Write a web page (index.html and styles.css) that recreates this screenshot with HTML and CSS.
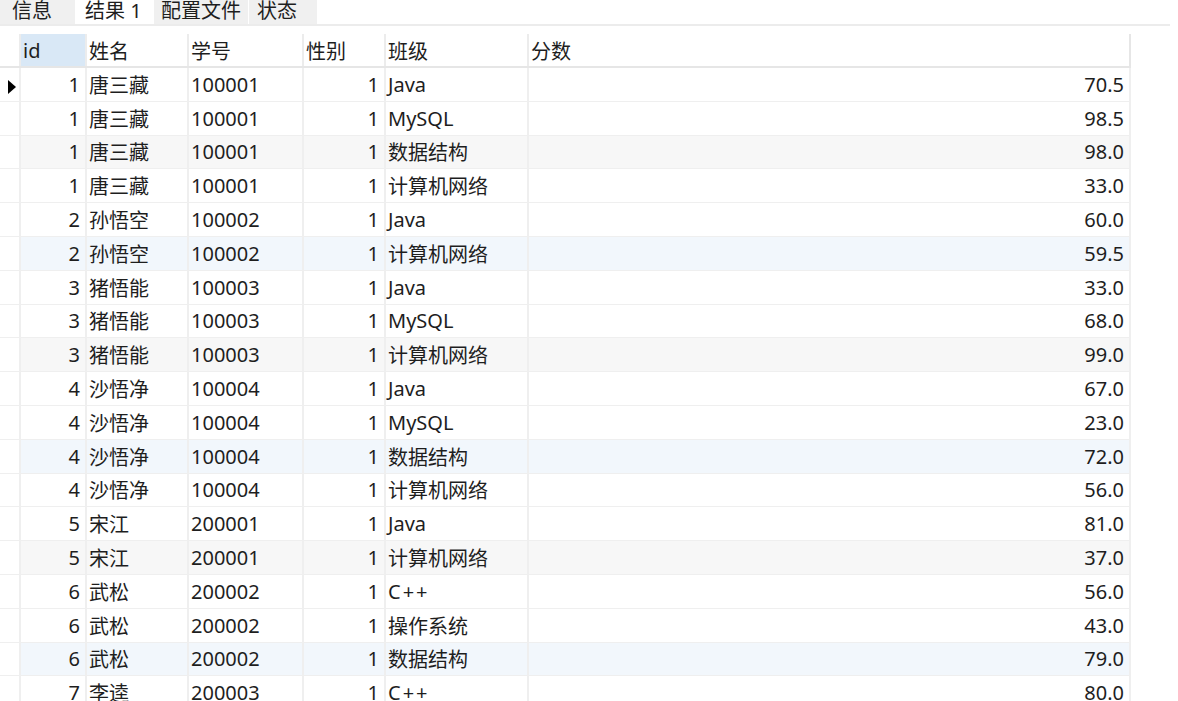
FILE: index.html
```html
<!DOCTYPE html>
<html lang="zh-CN">
<head>
    <meta charset="UTF-8">
    <title>结果 1</title>
    <link rel="stylesheet" href="styles.css">
</head>
<body>
    <div class="tabs">
        <div class="tab tab-info">信息</div>
        <div class="tab tab-result active">结果 1</div>
        <div class="tab tab-profile">配置文件</div>
        <div class="tab tab-status">状态</div>
    </div>

    <table class="grid">
        <colgroup>
            <col class="c-ind"><col class="c-id"><col class="c-name"><col class="c-no">
            <col class="c-sex"><col class="c-class"><col class="c-score">
        </colgroup>
        <thead>
            <tr>
                <th class="ind"></th>
                <th class="sel">id</th>
                <th>姓名</th>
                <th>学号</th>
                <th>性别</th>
                <th>班级</th>
                <th>分数</th>
            </tr>
        </thead>
        <tbody>
            <tr><td class="ind"><span class="arrow"></span></td><td class="num">1</td><td>唐三藏</td><td>100001</td><td class="num">1</td><td>Java</td><td class="num">70.5</td></tr>
            <tr><td class="ind"></td><td class="num">1</td><td>唐三藏</td><td>100001</td><td class="num">1</td><td>MySQL</td><td class="num">98.5</td></tr>
            <tr class="gray"><td class="ind"></td><td class="num">1</td><td>唐三藏</td><td>100001</td><td class="num">1</td><td>数据结构</td><td class="num">98.0</td></tr>
            <tr><td class="ind"></td><td class="num">1</td><td>唐三藏</td><td>100001</td><td class="num">1</td><td>计算机网络</td><td class="num">33.0</td></tr>
            <tr><td class="ind"></td><td class="num">2</td><td>孙悟空</td><td>100002</td><td class="num">1</td><td>Java</td><td class="num">60.0</td></tr>
            <tr class="blue"><td class="ind"></td><td class="num">2</td><td>孙悟空</td><td>100002</td><td class="num">1</td><td>计算机网络</td><td class="num">59.5</td></tr>
            <tr><td class="ind"></td><td class="num">3</td><td>猪悟能</td><td>100003</td><td class="num">1</td><td>Java</td><td class="num">33.0</td></tr>
            <tr><td class="ind"></td><td class="num">3</td><td>猪悟能</td><td>100003</td><td class="num">1</td><td>MySQL</td><td class="num">68.0</td></tr>
            <tr class="gray"><td class="ind"></td><td class="num">3</td><td>猪悟能</td><td>100003</td><td class="num">1</td><td>计算机网络</td><td class="num">99.0</td></tr>
            <tr><td class="ind"></td><td class="num">4</td><td>沙悟净</td><td>100004</td><td class="num">1</td><td>Java</td><td class="num">67.0</td></tr>
            <tr><td class="ind"></td><td class="num">4</td><td>沙悟净</td><td>100004</td><td class="num">1</td><td>MySQL</td><td class="num">23.0</td></tr>
            <tr class="blue"><td class="ind"></td><td class="num">4</td><td>沙悟净</td><td>100004</td><td class="num">1</td><td>数据结构</td><td class="num">72.0</td></tr>
            <tr><td class="ind"></td><td class="num">4</td><td>沙悟净</td><td>100004</td><td class="num">1</td><td>计算机网络</td><td class="num">56.0</td></tr>
            <tr><td class="ind"></td><td class="num">5</td><td>宋江</td><td>200001</td><td class="num">1</td><td>Java</td><td class="num">81.0</td></tr>
            <tr class="gray"><td class="ind"></td><td class="num">5</td><td>宋江</td><td>200001</td><td class="num">1</td><td>计算机网络</td><td class="num">37.0</td></tr>
            <tr><td class="ind"></td><td class="num">6</td><td>武松</td><td>200002</td><td class="num">1</td><td class="plus">C++</td><td class="num">56.0</td></tr>
            <tr><td class="ind"></td><td class="num">6</td><td>武松</td><td>200002</td><td class="num">1</td><td>操作系统</td><td class="num">43.0</td></tr>
            <tr class="blue"><td class="ind"></td><td class="num">6</td><td>武松</td><td>200002</td><td class="num">1</td><td>数据结构</td><td class="num">79.0</td></tr>
            <tr><td class="ind"></td><td class="num">7</td><td>李逵</td><td>200003</td><td class="num">1</td><td class="plus">C++</td><td class="num">80.0</td></tr>
        </tbody>
    </table>
</body>
</html>
```

FILE: styles.css
```css
body {
    margin: 0;
    background: #fff;
    color: #1e1e1e;
    font-family: "Noto Sans", "Noto Sans CJK SC", sans-serif;
    font-size: 20px;
    overflow: hidden;
}
.tabs {
    display: flex;
    width: 1170px;
    height: 24px;
    border-bottom: 2px solid #ececec;
}
.tab {
    background: #f0f0f0;
    margin-right: 1px;
    line-height: 22px;
    padding-left: 12px;
    box-sizing: border-box;
}
.tab.active {
    background: #fff;
    padding-left: 9px;
}
.tab-info { width: 75px; }
.tab-result { width: 77px; }
.tab-profile { width: 94px; padding-left: 7px; }
.tab-status { width: 68px; padding-left: 8px; }

.grid {
    margin-top: 8px;
    border-collapse: collapse;
    table-layout: fixed;
    width: 1130px;
}
.c-ind { width: 20px; }
.c-id { width: 66px; }
.c-name { width: 102px; }
.c-no { width: 115px; }
.c-sex { width: 82px; }
.c-class { width: 143px; }
.c-score { width: 602px; }

.grid th {
    height: 32px;
    font-weight: normal;
    text-align: left;
    padding: 0 3px 0 2px;
    border-left: 2px solid #ececec;
    border-bottom: 2px solid #e6e6e6;
    white-space: nowrap;
}
.grid th:last-child {
    border-right: 2px solid #e6e6e6;
}
.grid th.ind {
    border-left: none;
}
.grid th.sel {
    background: #d9e8f6;
}
.grid td {
    height: 32.8px;
    padding: 0 5px 0 2px;
    border-left: 2px solid #efefef;
    border-bottom: 1px solid #efefef;
    white-space: nowrap;
}
.grid td:last-child {
    border-right: 2px solid #efefef;
}
.grid td.ind {
    border-left: none;
    padding: 0 0 0 8px;
    text-align: left;
}
.grid td.num {
    text-align: right;
}
.grid td.plus {
    letter-spacing: 2px;
}
.grid tr.gray td {
    background: #f7f7f7;
}
.grid tr.blue td {
    background: #f2f7fc;
}
.grid tr.gray td.ind,
.grid tr.blue td.ind {
    background: #fff;
}
.arrow {
    display: inline-block;
    vertical-align: middle;
    width: 0;
    height: 0;
    border-top: 7px solid transparent;
    border-bottom: 7px solid transparent;
    border-left: 8px solid #000;
}
```
